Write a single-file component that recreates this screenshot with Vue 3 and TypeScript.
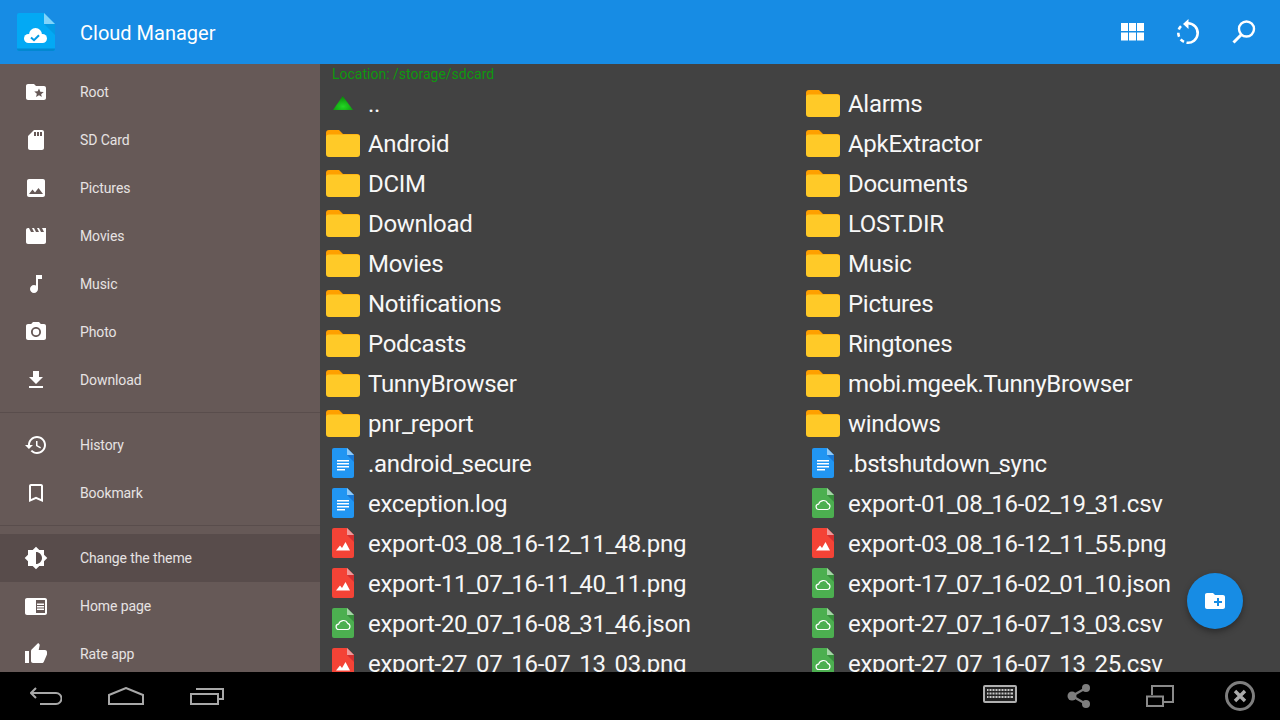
<script setup lang="ts">
type Kind = 'up' | 'folder' | 'doc' | 'image' | 'cloud'
interface Entry { name: string; kind: Kind }
interface NavItem { label: string; paths: string[]; active?: boolean }

const groups: NavItem[][] = [
  [
    { label: 'Root', paths: ['M20 6h-8l-2-2H4c-1.1 0-2 .9-2 2v12c0 1.1.9 2 2 2h16c1.1 0 2-.9 2-2V8c0-1.1-.9-2-2-2zm-2.06 11L15 15.28 12.06 17l.78-3.33-2.59-2.24 3.41-.29L15 8.5l1.34 3.14 3.41.29-2.59 2.24.78 3.33z'] },
    { label: 'SD Card', paths: ['M18 2h-8L4.02 8 4 20c0 1.1.9 2 2 2h12c1.1 0 2-.9 2-2V4c0-1.1-.9-2-2-2zm-6 6h-2V4h2v4zm3 0h-2V4h2v4zm3 0h-2V4h2v4z'] },
    { label: 'Pictures', paths: ['M21 19V5c0-1.1-.9-2-2-2H5c-1.1 0-2 .9-2 2v14c0 1.1.9 2 2 2h14c1.1 0 2-.9 2-2zM8.5 13.5l2.5 3.01L14.5 12l4.5 6H5l3.5-4.5z'] },
    { label: 'Movies', paths: ['M18 4l2 4h-3l-2-4h-2l2 4h-3l-2-4H8l2 4H7L5 4H4c-1.1 0-1.99.9-1.99 2L2 18c0 1.1.9 2 2 2h16c1.1 0 2-.9 2-2V4h-4z'] },
    { label: 'Music', paths: ['M12 3v10.55c-.59-.34-1.27-.55-2-.55-2.21 0-4 1.79-4 4s1.79 4 4 4 4-1.79 4-4V7h4V3h-6z'] },
    { label: 'Photo', paths: ['M9 2L7.17 4H4c-1.1 0-2 .9-2 2v12c0 1.1.9 2 2 2h16c1.1 0 2-.9 2-2V6c0-1.1-.9-2-2-2h-3.17L15 2H9zm3 15c-2.76 0-5-2.24-5-5s2.24-5 5-5 5 2.24 5 5-2.24 5-5 5z', 'M12 8.8a3.2 3.2 0 1 0 0 6.4 3.2 3.2 0 0 0 0-6.4z'] },
    { label: 'Download', paths: ['M19 9h-4V3H9v6H5l7 7 7-7zM5 18v2h14v-2H5z'] },
  ],
  [
    { label: 'History', paths: ['M13 3c-4.97 0-9 4.03-9 9H1l3.89 3.89.07.14L9 12H6c0-3.87 3.13-7 7-7s7 3.13 7 7-3.13 7-7 7c-1.93 0-3.68-.79-4.94-2.06l-1.42 1.42C8.27 19.99 10.51 21 13 21c4.97 0 9-4.03 9-9s-4.03-9-9-9zm-1 5v5l4.28 2.54.72-1.21-3.5-2.08V8H12z'] },
    { label: 'Bookmark', paths: ['M17 3H7c-1.1 0-1.99.9-1.99 2L5 21l7-3 7 3V5c0-1.1-.9-2-2-2zm0 15l-5-2.18L7 18V5h10v13z'] },
  ],
  [
    { label: 'Change the theme', active: true, paths: ['M20 15.31L23.31 12 20 8.69V4h-4.69L12 .69 8.69 4H4v4.69L.69 12 4 15.31V20h4.69L12 23.31 15.31 20H20v-4.69zM12 18V6c3.31 0 6 2.69 6 6s-2.69 6-6 6z'] },
    { label: 'Home page', paths: ['M13 12h7v1.5h-7zm0-2.5h7V11h-7zm0 5h7V16h-7zM21 4H3c-1.1 0-2 .9-2 2v13c0 1.1.9 2 2 2h18c1.1 0 2-.9 2-2V6c0-1.1-.9-2-2-2zm0 15h-9V6h9v13z'] },
    { label: 'Rate app', paths: ['M1 21h4V9H1v12zm22-11c0-1.1-.9-2-2-2h-6.31l.95-4.57.03-.32c0-.41-.17-.79-.44-1.06L14.17 1 7.59 7.59C7.22 7.95 7 8.45 7 9v10c0 1.1.9 2 2 2h9c.83 0 1.54-.5 1.84-1.22l3.02-7.05c.09-.23.14-.47.14-.73v-1.91l-.01-.01L23 10z'] },
  ],
]

const entries: Entry[] = [
  { name: '..', kind: 'up' }, { name: 'Alarms', kind: 'folder' },
  { name: 'Android', kind: 'folder' }, { name: 'ApkExtractor', kind: 'folder' },
  { name: 'DCIM', kind: 'folder' }, { name: 'Documents', kind: 'folder' },
  { name: 'Download', kind: 'folder' }, { name: 'LOST.DIR', kind: 'folder' },
  { name: 'Movies', kind: 'folder' }, { name: 'Music', kind: 'folder' },
  { name: 'Notifications', kind: 'folder' }, { name: 'Pictures', kind: 'folder' },
  { name: 'Podcasts', kind: 'folder' }, { name: 'Ringtones', kind: 'folder' },
  { name: 'TunnyBrowser', kind: 'folder' }, { name: 'mobi.mgeek.TunnyBrowser', kind: 'folder' },
  { name: 'pnr_report', kind: 'folder' }, { name: 'windows', kind: 'folder' },
  { name: '.android_secure', kind: 'doc' }, { name: '.bstshutdown_sync', kind: 'doc' },
  { name: 'exception.log', kind: 'doc' }, { name: 'export-01_08_16-02_19_31.csv', kind: 'cloud' },
  { name: 'export-03_08_16-12_11_48.png', kind: 'image' }, { name: 'export-03_08_16-12_11_55.png', kind: 'image' },
  { name: 'export-11_07_16-11_40_11.png', kind: 'image' }, { name: 'export-17_07_16-02_01_10.json', kind: 'cloud' },
  { name: 'export-20_07_16-08_31_46.json', kind: 'cloud' }, { name: 'export-27_07_16-07_13_03.csv', kind: 'cloud' },
  { name: 'export-27_07_16-07_13_03.png', kind: 'image' }, { name: 'export-27_07_16-07_13_25.csv', kind: 'cloud' },
]

const fileColor: Record<string, string[]> = {
  doc: ['#2196f3', '#90caf9', '#1976d2'],
  image: ['#f44336', '#ef9a9a', '#d32f2f'],
  cloud: ['#4caf50', '#a5d6a7', '#388e3c'],
}
</script>

<template>
  <div class="screen">
    <header class="topbar">
      <svg class="logo" viewBox="0 0 38 38" width="38" height="38">
        <path d="M2 0h25l11 11v25a2 2 0 0 1-2 2H2a2 2 0 0 1-2-2V2a2 2 0 0 1 2-2z" fill="#03a9f4" />
        <path d="M0 35.500V36a2 2 0 0 0 2 2h34a2 2 0 0 0 2-2v-.5z" fill="#0288d1" />
        <path d="M27 11l11 11V11z" fill="#039be5" />
        <path d="M27 0l11 11H27z" fill="#81d4fa" />
        <circle cx="11.500" cy="25.500" r="4.500" fill="#fff" />
        <circle cx="18.500" cy="21.500" r="6.500" fill="#fff" />
        <circle cx="25.500" cy="25.500" r="4.500" fill="#fff" />
        <path d="M11.500 24h14v6h-14z" fill="#fff" />
        <path d="M14 24.500l3 2.700 5-5" fill="none" stroke="#039be5" stroke-width="2" />
      </svg>
      <h1 class="title">Cloud Manager</h1>
      <div class="actions">
        <svg viewBox="0 0 24 24" width="24" height="24" fill="#fff">
          <path d="M1 3h7v8H1zM9 3h7v8H9zM17 3h7v8h-7zM1 12.500h7v8H1zM9 12.500h7v8H9zM17 12.500h7v8h-7z" />
        </svg>
        <svg class="refresh" viewBox="0 0 24 26" width="24" height="26" fill="none" stroke="#fff" stroke-width="2.600">
          <path d="M12 4.200a9.800 9.800 0 1 1-1.500 19.500" />
          <path d="M8 22.900a9.800 9.800 0 0 1-3.300-2.500M3.100 17.800a9.800 9.800 0 0 1-.8-4M2.800 10.500a9.800 9.800 0 0 1 2.200-3.400" />
          <path d="M12.500 0L7 5l5.500 5z" fill="#fff" stroke="none" />
        </svg>
        <svg viewBox="0 0 24 24" width="24" height="24" fill="none" stroke="#fff">
          <circle cx="14.500" cy="9" r="7.500" stroke-width="2.400" />
          <path d="M9 15L1.500 22.500" stroke-width="3" />
        </svg>
      </div>
    </header>

    <div class="body">
      <nav class="drawer">
        <template v-for="(group, g) in groups" :key="g">
          <div v-if="g > 0" class="divider"></div>
          <div class="group" :class="{ first: g === 0 }">
            <div v-for="item in group" :key="item.label" class="nav-item" :class="{ active: item.active }">
              <svg class="nav-icon" viewBox="0 0 24 24" width="24" height="24">
                <path v-for="d in item.paths" :key="d" :d="d" fill="#fff" />
              </svg>
              <span>{{ item.label }}</span>
            </div>
          </div>
        </template>
      </nav>

      <main class="files">
        <div class="location">Location: /storage/sdcard</div>
        <div class="grid">
          <div v-for="e in entries" :key="e.name" class="row">
            <span class="icon-box">
              <svg v-if="e.kind === 'up'" viewBox="0 0 20 14" width="20" height="14">
                <defs>
                  <radialGradient id="upg" cx="0.5" cy="0.75" r="0.75">
                    <stop offset="0" stop-color="#24d824" />
                    <stop offset="0.7" stop-color="#0f9c0f" />
                    <stop offset="1" stop-color="#0d7d0d" />
                  </radialGradient>
                </defs>
                <path d="M9.700 0L0 14h20z" fill="url(#upg)" />
              </svg>
              <svg v-else-if="e.kind === 'folder'" viewBox="0 0 34 27" width="34" height="27">
                <path d="M3 0h10l4 4h14a3 3 0 0 1 3 3v4H0V3a3 3 0 0 1 3-3z" fill="#ffa000" />
                <path d="M3 4.500h28a3 3 0 0 1 3 3v16.500a3 3 0 0 1-3 3H3a3 3 0 0 1-3-3V7.500a3 3 0 0 1 3-3z" fill="#ffca28" />
              </svg>
              <svg v-else viewBox="0 0 22 30" width="22" height="30">
                <path d="M2 0h13l7 7v21a2 2 0 0 1-2 2H2a2 2 0 0 1-2-2V2a2 2 0 0 1 2-2z" :fill="fileColor[e.kind][0]" />
                <path d="M15 7l7 7V7z" :fill="fileColor[e.kind][2]" />
                <path d="M15 0l7 7h-7z" :fill="fileColor[e.kind][1]" />
                <path v-if="e.kind === 'doc'" d="M5 12h12v1.500H5zM5 15h12v1.500H5zM5 18h12v1.500H5zM5 21h8v1.500H5z" fill="#fff" />
                <path v-else-if="e.kind === 'image'" d="M4 22.500l4-5 2 2.500 3.500-6 4.500 8.500z" fill="#fff" />
                <path v-else d="M7 21.500a2.700 2.700 0 0 1-.4-5.400 4.800 4.800 0 0 1 9-.8A3.200 3.200 0 0 1 15.500 21.500z" fill="none" stroke="#fff" stroke-width="1.200" />
              </svg>
            </span>
            <span class="name"><template v-for="(part, i) in e.name.split('_')" :key="i"><span v-if="i > 0" class="us">_</span>{{ part }}</template></span>
          </div>
        </div>
        <button class="fab" type="button" aria-label="New folder">
          <svg viewBox="0 0 24 24" width="24" height="24">
            <path d="M20 6h-8l-2-2H4c-1.110 0-2 .89-2 2v12c0 1.110.89 2 2 2h16c1.110 0 2-.89 2-2V8c0-1.110-.89-2-2-2zm-1 8h-3v3h-2v-3h-3v-2h3V9h2v3h3v2z" fill="#fff" />
          </svg>
        </button>
      </main>
    </div>

    <footer class="sysbar">
      <div class="sys-left">
        <svg viewBox="0 0 32 18" width="32" height="18" fill="none" stroke="#a8a8a8" stroke-width="2">
          <path d="M6 1L1 6l5 5M1 6h25a5 5 0 0 1 0 11H10" />
        </svg>
        <svg viewBox="0 0 36 18" width="36" height="18" fill="none" stroke="#a8a8a8" stroke-width="2">
          <path d="M1 17V8L18 1l17 7v9z" />
        </svg>
        <svg viewBox="0 0 34 18" width="34" height="18" fill="none" stroke="#a8a8a8" stroke-width="2">
          <path d="M1 7h27v10H1zM6 2h27v10h-4" />
        </svg>
      </div>
      <div class="sys-right">
        <svg class="kbd" viewBox="0 0 34 18" width="34" height="18">
          <rect x="1" y="1" width="32" height="16" rx="1" fill="#222" stroke="#b0b0b0" stroke-width="2" />
          <path d="M4 4h26v2H4zM4 7.500h26v2H4zM4 11h26v2H4z" fill="#c8c8c8" />
          <path d="M6 4v9M9 4v9M12 4v9M15 4v9M18 4v9M21 4v9M24 4v9M27 4v9" stroke="#222" stroke-width="1" />
        </svg>
        <svg viewBox="0 0 24 24" width="24" height="24" fill="#7e7e7e">
          <circle cx="19" cy="4" r="4" />
          <circle cx="5" cy="12" r="4.500" />
          <circle cx="19" cy="20" r="4" />
          <path d="M5 12L19 4M5 12l14 8" stroke="#7e7e7e" stroke-width="2.400" />
        </svg>
        <svg class="win" viewBox="0 0 28 22" width="28" height="22" fill="none" stroke="#8a8a8a" stroke-width="2">
          <path d="M6 10V1h21v16H17" />
          <path d="M1 11.500h16v9.500H1z" />
        </svg>
        <svg class="close" viewBox="0 0 30 30" width="30" height="30" fill="none">
          <circle cx="15" cy="15" r="13.500" stroke="#7e7e7e" stroke-width="3" />
          <path d="M10 10l10 10M20 10L10 20" stroke="#aaa" stroke-width="3.400" />
        </svg>
      </div>
    </footer>
  </div>
</template>

<style>
html, body { margin: 0; background: #000; }
</style>

<style scoped>
.screen {
  width: 1280px;
  height: 720px;
  display: flex;
  flex-direction: column;
  overflow: hidden;
  font-family: Roboto, "Liberation Sans", sans-serif;
}
.topbar {
  height: 64px;
  flex: none;
  background: #178ce4;
  display: flex;
  align-items: center;
  padding: 0 24px 0 17px;
  box-sizing: border-box;
}
.logo { flex: none; }
.title {
  margin: 2px 0 0 25px;
  font-size: 20px;
  font-weight: 400;
  color: #fff;
}
.actions {
  margin-left: auto;
  display: flex;
  align-items: center;
  gap: 32px;
}
.body {
  flex: 1;
  min-height: 0;
  display: flex;
}
.drawer {
  width: 320px;
  flex: none;
  background: #665957;
  overflow: hidden;
}
.group.first { padding-top: 4px; }
.divider {
  height: 1px;
  margin: 8px 0;
  background: #594d4c;
}
.nav-item {
  height: 48px;
  display: flex;
  align-items: center;
  padding-left: 24px;
  font-size: 14px;
  letter-spacing: -0.1px;
  color: #e6e3e3;
}
.nav-item.active { background: #584c4b; }
.nav-icon { flex: none; margin-right: 32px; }
.files {
  position: relative;
  flex: 1;
  min-width: 0;
  background: #424242;
  overflow: hidden;
}
.location {
  height: 20px;
  padding-left: 12px;
  font-size: 14px;
  line-height: 20px;
  color: #0e980e;
}
.grid {
  display: grid;
  grid-template-columns: 480px 480px;
  grid-auto-rows: 40px;
}
.row {
  display: flex;
  align-items: center;
  color: #f7f7f7;
  font-size: 24px;
  letter-spacing: -0.3px;
  white-space: nowrap;
}
.us { letter-spacing: -2px; }
.icon-box {
  width: 46px;
  margin-right: 2px;
  padding-bottom: 2px;
  flex: none;
  display: flex;
  justify-content: center;
  align-items: center;
  box-sizing: border-box;
}
.icon-box svg { display: block; flex: none; }
.fab {
  position: absolute;
  left: 867px;
  top: 509px;
  width: 56px;
  height: 56px;
  padding: 0;
  border: 0;
  border-radius: 50%;
  background: #178ce4;
  box-shadow: 0 3px 6px rgba(0, 0, 0, 0.35);
  display: flex;
  align-items: center;
  justify-content: center;
}
.sysbar {
  height: 48px;
  flex: none;
  background: #000;
  display: flex;
  align-items: center;
  justify-content: space-between;
  padding: 0 25px 0 30px;
  box-sizing: border-box;
}
.sys-left, .sys-right { display: flex; align-items: center; }
.sys-left { gap: 46px; }
.sys-right { gap: 50px; }
.win { margin-left: 5px; }
.close { margin-left: 1px; }
.kbd { margin-top: -4px; }
</style>
